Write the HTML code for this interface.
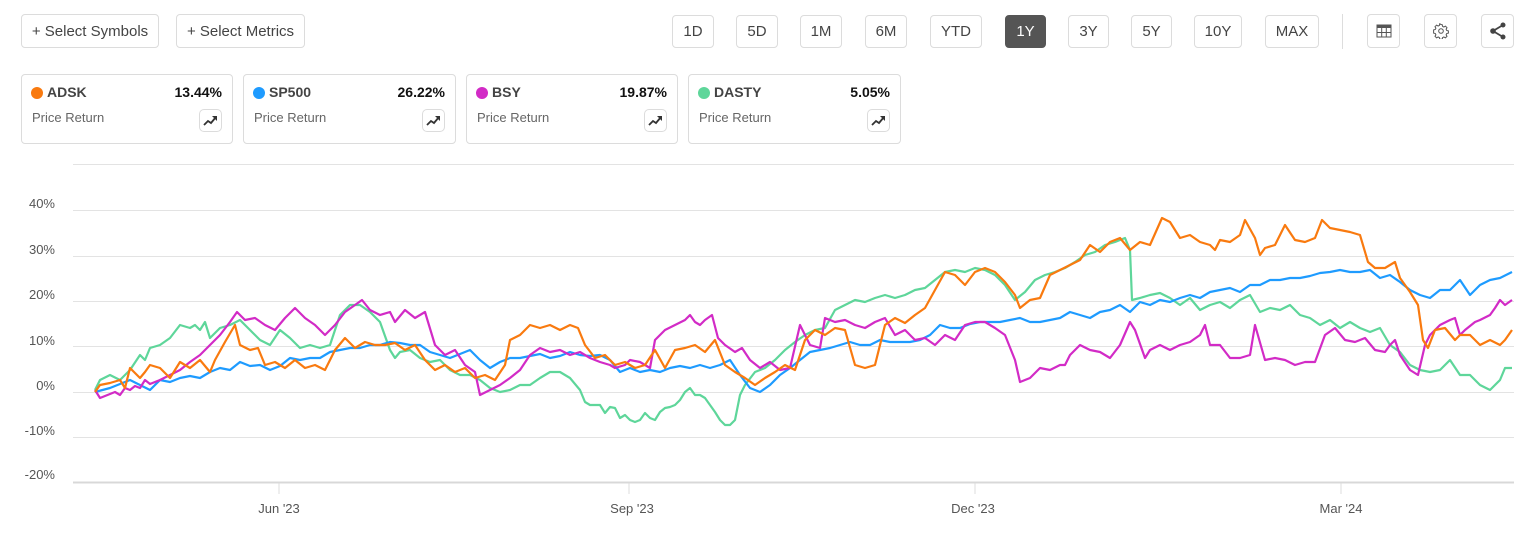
<!DOCTYPE html>
<html><head><meta charset="utf-8"><style>
*{margin:0;padding:0;box-sizing:border-box}
body{width:1538px;height:539px;background:#fff;font-family:"Liberation Sans",Arial,sans-serif;position:relative;overflow:hidden;color:#333}
.btn{position:absolute;border:1px solid #dcdcdc;border-radius:4px;background:#fff;font-size:15px;color:#444;display:flex;align-items:center;justify-content:center}
.card{position:absolute;top:74px;height:70px;border:1px solid #dcdcdc;border-radius:4px;background:#fff}
.dot{position:absolute;left:9px;top:12px;width:12px;height:12px;border-radius:50%}
.nm{position:absolute;left:25px;top:9px;font-weight:bold;font-size:14px;color:#444}
.pc{position:absolute;right:10px;top:9px;font-weight:bold;font-size:14px;color:#111}
.pr{position:absolute;left:10px;top:35px;font-size:13px;color:#666}
.tr{position:absolute;right:10px;top:34px;width:23px;height:23px;border:1px solid #dcdcdc;border-radius:5px;display:flex;align-items:center;justify-content:center}
.yl{position:absolute;left:0;width:55px;text-align:right;font-size:13px;color:#555}
.xl{position:absolute;top:501px;font-size:13px;color:#555;transform:translateX(-50%)}
</style></head><body>
<div class="btn" style="left:21px;top:14px;width:138px;height:34px">+ Select Symbols</div>
<div class="btn" style="left:176px;top:14px;width:129px;height:34px">+ Select Metrics</div>

<div class="btn" style="left:672px;top:15px;width:42px;height:33px">1D</div>
<div class="btn" style="left:736px;top:15px;width:42px;height:33px">5D</div>
<div class="btn" style="left:800px;top:15px;width:42px;height:33px">1M</div>
<div class="btn" style="left:865px;top:15px;width:42px;height:33px">6M</div>
<div class="btn" style="left:930px;top:15px;width:52px;height:33px">YTD</div>
<div class="btn" style="left:1005px;top:15px;width:41px;height:33px;background:#555;border-color:#555;color:#fff">1Y</div>
<div class="btn" style="left:1068px;top:15px;width:41px;height:33px">3Y</div>
<div class="btn" style="left:1131px;top:15px;width:41px;height:33px">5Y</div>
<div class="btn" style="left:1194px;top:15px;width:48px;height:33px">10Y</div>
<div class="btn" style="left:1265px;top:15px;width:54px;height:33px">MAX</div>
<div style="position:absolute;left:1342px;top:14px;width:1px;height:35px;background:#ddd"></div>
<div class="btn" style="left:1367px;top:14px;width:33px;height:34px"><svg width="16" height="14" viewBox="0 0 16 14"><rect x="1" y="1" width="14" height="12" fill="none" stroke="#555"/><rect x="1" y="1" width="14" height="3" fill="#555"/><path d="M1 8.5H15M5.7 4V13M10.3 4V13" stroke="#555"/></svg></div>
<div class="btn" style="left:1424px;top:14px;width:33px;height:34px"><svg width="16" height="16" viewBox="0 0 16 16"><path d="M8 1.5l1.2.2.4 1.7 1.3.6 1.5-.9 1.6 1.6-.9 1.5.6 1.3 1.7.4v2.2l-1.7.4-.6 1.3.9 1.5-1.6 1.6-1.5-.9-1.3.6-.4 1.7H6.8l-.4-1.7-1.3-.6-1.5.9-1.6-1.6.9-1.5-.6-1.3-1.7-.4V6.9l1.7-.4.6-1.3-.9-1.5 1.6-1.6 1.5.9 1.3-.6.4-1.7z" fill="none" stroke="#555" stroke-width="1"/><circle cx="8" cy="8" r="2.3" fill="none" stroke="#555"/></svg></div>
<div class="btn" style="left:1481px;top:14px;width:33px;height:34px"><svg width="18" height="18" viewBox="0 0 18 18"><path d="M14 3L4 9l10 6" fill="none" stroke="#444" stroke-width="1.8"/><circle cx="14" cy="3" r="2.5" fill="#444"/><circle cx="4" cy="9" r="2.8" fill="#444"/><circle cx="14" cy="15" r="2.5" fill="#444"/></svg></div>

<div class="card" style="left:21px;width:212px"><div class="dot" style="background:#f97a0f"></div><div class="nm">ADSK</div><div class="pc">13.44%</div><div class="pr">Price Return</div><div class="tr"><svg width="15" height="11" viewBox="0 0 15 11"><path d="M1 10l4-4 3 2 5-6" fill="none" stroke="#333" stroke-width="1.8"/><path d="M9 1h5v5z" fill="#333"/></svg></div></div>
<div class="card" style="left:243px;width:213px"><div class="dot" style="background:#1e9bff"></div><div class="nm">SP500</div><div class="pc">26.22%</div><div class="pr">Price Return</div><div class="tr"><svg width="15" height="11" viewBox="0 0 15 11"><path d="M1 10l4-4 3 2 5-6" fill="none" stroke="#333" stroke-width="1.8"/><path d="M9 1h5v5z" fill="#333"/></svg></div></div>
<div class="card" style="left:466px;width:212px"><div class="dot" style="background:#d22bc6"></div><div class="nm">BSY</div><div class="pc">19.87%</div><div class="pr">Price Return</div><div class="tr"><svg width="15" height="11" viewBox="0 0 15 11"><path d="M1 10l4-4 3 2 5-6" fill="none" stroke="#333" stroke-width="1.8"/><path d="M9 1h5v5z" fill="#333"/></svg></div></div>
<div class="card" style="left:688px;width:213px"><div class="dot" style="background:#5ed69a"></div><div class="nm">DASTY</div><div class="pc">5.05%</div><div class="pr">Price Return</div><div class="tr"><svg width="15" height="11" viewBox="0 0 15 11"><path d="M1 10l4-4 3 2 5-6" fill="none" stroke="#333" stroke-width="1.8"/><path d="M9 1h5v5z" fill="#333"/></svg></div></div>

<div class="yl" style="top:196px">40%</div>
<div class="yl" style="top:242px">30%</div>
<div class="yl" style="top:287px">20%</div>
<div class="yl" style="top:333px">10%</div>
<div class="yl" style="top:378px">0%</div>
<div class="yl" style="top:423px">-10%</div>
<div class="yl" style="top:467px">-20%</div>
<div class="xl" style="left:279px">Jun '23</div>
<div class="xl" style="left:632px">Sep '23</div>
<div class="xl" style="left:973px">Dec '23</div>
<div class="xl" style="left:1341px">Mar '24</div>

<svg style="position:absolute;left:0;top:0" width="1538" height="539">
<g stroke="#e3e3e3" stroke-width="1">
<path d="M73 164.5H1514M73 210.5H1514M73 256.5H1514M73 301.5H1514M73 346.5H1514M73 392.5H1514M73 437.5H1514"/>
</g>
<path d="M73 482.5H1514" stroke="#d8d8d8" stroke-width="2"/>
<path d="M279 483V494M629 483V494M975 483V494M1341 483V494" stroke="#ddd"/>
<g fill="none" stroke-width="2.2" stroke-linejoin="round">
<polyline stroke="#5ed69a" points="95,390 100,380 110,375 120,380 130,370 140,355 145,360 150,348 160,345 170,338 180,325 190,328 195,325 200,330 205,322 210,338 220,328 230,325 240,320 250,330 260,340 270,345 280,330 290,338 300,348 310,345 320,348 330,345 340,315 350,305 360,305 370,312 380,322 390,350 395,358 400,352 410,350 420,358 430,362 440,360 450,370 460,375 470,375 480,380 490,388 500,392 510,390 520,385 530,385 540,378 550,372 560,372 570,378 580,390 585,402 590,405 600,405 605,413 610,407 615,408 620,418 625,415 630,420 635,422 640,420 645,413 650,418 655,420 660,412 665,408 670,407 675,405 680,400 685,392 690,388 695,395 700,395 705,398 710,405 715,412 720,420 725,425 730,425 735,420 740,395 745,385 755,372 765,368 775,360 785,350 795,342 805,335 815,330 825,328 835,310 845,305 855,300 865,302 875,298 885,295 895,298 905,295 915,290 925,288 935,280 945,272 955,270 965,272 975,268 985,270 995,275 1005,285 1015,300 1025,292 1035,280 1045,275 1055,272 1065,268 1075,262 1085,255 1095,252 1105,245 1115,242 1125,238 1130,250 1132,300 1140,298 1150,295 1160,293 1170,298 1180,305 1190,298 1200,310 1210,305 1220,302 1230,308 1240,300 1250,295 1260,312 1270,308 1280,310 1290,305 1300,315 1310,318 1320,325 1330,320 1340,328 1350,322 1360,328 1370,332 1380,328 1390,345 1400,352 1410,365 1420,370 1430,372 1440,370 1450,360 1460,375 1470,375 1480,385 1490,390 1500,380 1505,368 1512,368"/>
<polyline stroke="#1e9bff" points="95,392 110,388 120,384 130,380 140,385 150,390 160,380 170,382 180,378 190,376 200,378 210,372 220,368 230,370 240,362 250,366 260,365 270,370 280,366 290,358 300,360 310,358 320,358 330,352 340,350 350,348 360,348 370,345 380,345 390,342 400,343 410,345 420,345 430,352 440,355 450,358 460,354 470,350 480,360 490,368 500,362 510,358 520,358 530,356 540,354 550,358 560,356 570,352 580,355 590,356 600,355 610,360 620,372 630,368 640,372 650,370 660,372 670,368 680,366 690,368 700,365 710,368 720,365 730,360 740,375 750,388 760,392 770,385 780,375 790,368 800,360 810,352 820,350 830,348 840,345 850,342 860,345 870,345 880,340 890,342 900,342 910,342 920,340 930,335 940,325 950,328 960,328 970,324 980,322 990,322 1000,322 1010,320 1020,318 1030,322 1040,322 1050,320 1060,318 1070,312 1080,315 1090,318 1100,312 1110,310 1120,305 1130,312 1140,302 1150,305 1160,300 1170,302 1180,298 1190,295 1200,298 1210,292 1220,290 1230,288 1240,292 1250,285 1260,285 1270,280 1280,280 1290,278 1300,278 1310,276 1320,273 1330,272 1340,270 1350,272 1360,272 1370,270 1380,278 1390,275 1400,282 1410,290 1420,295 1430,298 1440,290 1450,290 1460,280 1470,295 1480,285 1490,280 1500,278 1512,272"/>
<polyline stroke="#d22bc6" points="95,390 100,398 105,396 110,394 115,392 120,395 125,388 130,390 135,386 140,388 145,380 150,384 160,380 170,375 180,370 190,362 200,355 210,345 220,335 230,322 237,312 245,320 255,318 265,325 275,330 285,318 295,308 305,318 315,325 325,335 335,325 345,312 355,305 362,300 370,310 380,315 390,312 395,322 405,310 415,318 425,312 435,345 445,355 455,350 465,365 475,372 480,395 490,390 500,385 510,378 520,370 530,355 540,348 550,352 560,350 570,355 580,352 590,358 600,362 610,365 615,368 625,365 630,360 640,362 650,368 655,340 665,330 675,325 685,320 690,315 695,322 700,325 705,320 712,315 718,338 725,345 735,352 742,348 750,360 760,368 770,362 780,370 790,368 800,325 810,345 820,348 825,318 835,322 845,320 855,325 865,328 875,322 885,318 895,335 905,330 915,340 925,338 935,345 945,335 955,340 965,325 975,322 985,322 995,328 1005,335 1015,360 1020,382 1030,378 1040,368 1050,370 1060,365 1065,365 1070,355 1080,345 1090,350 1100,352 1110,358 1120,345 1130,322 1135,330 1145,358 1150,350 1160,345 1170,350 1180,345 1190,342 1200,335 1205,325 1210,345 1220,345 1230,358 1240,358 1250,355 1255,325 1265,360 1275,358 1285,360 1295,365 1305,362 1315,362 1325,335 1335,328 1345,340 1355,342 1365,338 1375,350 1385,352 1390,345 1395,340 1400,355 1410,370 1418,375 1425,345 1430,335 1440,325 1450,320 1455,318 1460,335 1465,330 1475,322 1480,320 1490,315 1495,308 1500,300 1505,305 1512,300"/>
<polyline stroke="#f97a0f" points="95,392 100,385 110,383 120,380 125,388 130,368 140,378 145,372 150,365 160,368 170,378 180,362 190,368 200,360 210,372 215,360 225,342 235,325 240,345 250,350 258,348 265,365 275,362 285,368 295,360 305,368 315,365 325,370 335,350 345,338 355,348 365,342 375,345 385,345 395,343 405,350 415,345 425,360 435,370 445,365 455,372 465,368 475,378 485,375 495,380 505,365 510,340 520,335 530,325 540,328 550,325 560,330 570,325 578,328 585,345 595,358 605,355 615,365 625,362 635,368 645,365 655,350 665,368 675,350 685,348 695,345 705,352 715,340 725,365 735,372 745,378 755,385 765,378 775,372 785,365 795,370 805,340 815,330 825,335 835,328 845,330 855,365 865,368 875,365 885,325 895,318 905,323 915,315 925,308 935,290 945,272 955,275 965,285 975,272 985,268 995,272 1005,282 1015,295 1020,308 1030,300 1040,298 1050,275 1060,270 1070,265 1080,260 1090,245 1100,252 1110,242 1120,238 1130,250 1140,242 1150,245 1162,218 1170,222 1180,238 1190,235 1200,242 1210,245 1215,250 1220,240 1230,242 1240,235 1245,220 1255,238 1260,255 1265,248 1275,245 1285,225 1295,240 1305,242 1315,238 1322,220 1330,228 1340,230 1350,232 1360,235 1368,262 1375,268 1385,268 1395,262 1400,278 1410,292 1418,305 1423,340 1428,348 1435,330 1445,328 1455,340 1460,335 1470,335 1480,345 1490,340 1500,345 1505,340 1512,330"/>
</g>
</svg>
</body></html>
